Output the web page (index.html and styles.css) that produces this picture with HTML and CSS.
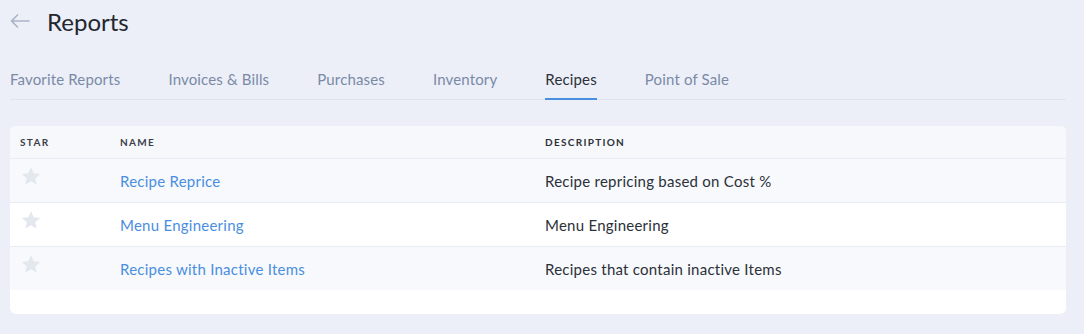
FILE: index.html
```html
<!DOCTYPE html>
<html lang="en">
<head>
  <meta charset="UTF-8">
  <title>Reports</title>
  <link rel="stylesheet" href="styles.css">
</head>
<body>
  <!-- page header -->
  <div class="page-head">
    <svg class="back" width="20" height="14" viewBox="0 0 20 14" fill="none" stroke="#a9b4c6" stroke-width="1.6" stroke-linecap="round" stroke-linejoin="round">
      <path d="M19 7H1.5M7.5 1L1.5 7l6 6"/>
    </svg>
    <h1>Reports</h1>
  </div>

  <!-- tabs -->
  <nav class="tabs">
    <a class="tab">Favorite Reports</a>
    <a class="tab">Invoices &amp; Bills</a>
    <a class="tab">Purchases</a>
    <a class="tab">Inventory</a>
    <a class="tab active">Recipes</a>
    <a class="tab">Point of Sale</a>
  </nav>

  <!-- report list -->
  <div class="card">
    <div class="row head">
      <div class="c-star">STAR</div>
      <div class="c-name">NAME</div>
      <div class="c-desc">DESCRIPTION</div>
    </div>
    <div class="row">
      <div class="c-star"><svg class="star" viewBox="0 0 24 24"><path d="M12 2.5l2.9 6.6 7.1.6-5.4 4.7 1.6 7-6.2-3.7-6.2 3.7 1.6-7L2 9.7l7.1-.6z"/></svg></div>
      <div class="c-name"><a>Recipe Reprice</a></div>
      <div class="c-desc">Recipe repricing based on Cost %</div>
    </div>
    <div class="row">
      <div class="c-star"><svg class="star" viewBox="0 0 24 24"><path d="M12 2.5l2.9 6.6 7.1.6-5.4 4.7 1.6 7-6.2-3.7-6.2 3.7 1.6-7L2 9.7l7.1-.6z"/></svg></div>
      <div class="c-name"><a>Menu Engineering</a></div>
      <div class="c-desc">Menu Engineering</div>
    </div>
    <div class="row">
      <div class="c-star"><svg class="star" viewBox="0 0 24 24"><path d="M12 2.5l2.9 6.6 7.1.6-5.4 4.7 1.6 7-6.2-3.7-6.2 3.7 1.6-7L2 9.7l7.1-.6z"/></svg></div>
      <div class="c-name"><a>Recipes with Inactive Items</a></div>
      <div class="c-desc">Recipes that contain inactive Items</div>
    </div>
  </div>
</body>
</html>
```

FILE: styles.css
```css
/* base */
body {
  margin: 0;
  padding: 0 18px 0 10px;
  background-color: #eceff8;
  font-family: Lato, "Open Sans", sans-serif;
  color: #2c3038;
}

/* header */
.page-head {
  display: flex;
  align-items: center;
  height: 42px;
}
.back {
  margin-right: 17px;
}
h1 {
  margin: 0;
  font-size: 24px;
  font-weight: 400;
  color: #22262e;
}

/* tabs */
.tabs {
  display: flex;
  gap: 48px;
  margin-top: 18px;
  border-bottom: 1px solid #dfe3ee;
}
.tab {
  font-size: 15px;
  letter-spacing: 0.15px;
  color: #7a8aa6;
  padding: 10px 0 10px;
  border-bottom: 2px solid transparent;
  margin-bottom: -1px;
}
.tab.active {
  color: #2c3038;
  border-bottom-color: #4a8ee0;
}

/* card */
.card {
  margin-top: 26px;
  background-color: #fff;
  border-radius: 6px;
  padding-bottom: 24px;
  overflow: hidden;
}
.row {
  display: grid;
  grid-template-columns: 100px 425px 1fr;
  align-items: center;
  height: 43px;
  padding-left: 10px;
  border-bottom: 1px solid #e8ecf4;
  font-size: 15px;
  letter-spacing: 0.25px;
  background-color: #f7f9fc;
}
.row:nth-child(odd) {
  background-color: #fff;
}
.row.head {
  height: 32px;
  font-size: 10px;
  font-weight: 700;
  letter-spacing: 1.3px;
  color: #3a3f4b;
  background-color: #f7f8fb;
}
.row:last-child {
  border-bottom: none;
  background-color: #f7f9fc;
}
.c-name a {
  color: #4a8ee0;
}
.c-desc {
  color: #2c3038;
}
.star {
  display: block;
  width: 22px;
  height: 22px;
  margin-top: -9px;
  fill: #e3e7ee;
}
```
